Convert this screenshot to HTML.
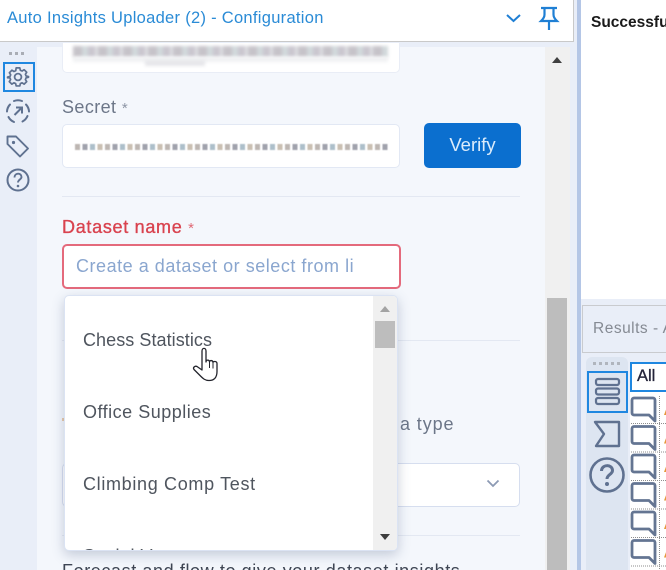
<!DOCTYPE html>
<html><head><meta charset="utf-8"><style>
*{box-sizing:border-box}
html,body{margin:0;padding:0;width:666px;height:570px;overflow:hidden}
#p{width:666px;height:570px;overflow:hidden;position:relative;background:#e9eef8;font-family:"Liberation Sans",sans-serif;filter:blur(.3px)}
.a{position:absolute}
.t{position:absolute;white-space:nowrap;line-height:20px}
.in{position:absolute;background:#fff;border:1px solid #e2e8f4;border-radius:5px}
.hr{position:absolute;height:1px;background:#e3e8f2;left:62px;width:458px}
svg{position:absolute;overflow:visible}
</style></head><body><div id="p">
<!-- title bar -->
<div class="a" style="left:0;top:0;width:574px;height:42px;background:#fff;border-bottom:1px solid #c9c9c9;border-right:1px solid #c9c9c9"></div>
<div class="t" style="left:7px;top:8px;font-size:16.500px;color:#2a8bd6;letter-spacing:.29px">Auto Insights Uploader (2) - Configuration</div>
<svg style="left:505px;top:12px" width="18" height="12" fill="none" stroke="#1f7fd4" stroke-width="2"><path d="M2 3l6.500 6L15 3"/></svg>
<svg style="left:538px;top:5px" width="22" height="26" fill="none" stroke="#1f7fd4" stroke-width="2.200"><path d="M3 3h16M6.500 3v6.500c0 3.500-2 5-3.500 6.500h16c-1.500-1.500-3.500-3-3.500-6.500V3M11 16v9"/></svg>
<!-- left rail -->
<div class="a" style="left:0;top:43px;width:37px;height:527px;background:#e9eef8"></div>
<div class="a" style="left:9px;top:52px;width:15px;height:3px;background:repeating-linear-gradient(90deg,#a9adb5 0 3px,transparent 3px 6px)"></div>
<div class="a" style="left:3px;top:62px;width:32px;height:30px;border:2px solid #1f87e0"></div>
<svg style="left:6px;top:65px" width="24" height="24" fill="none" stroke="#5f7190" stroke-width="1.800"><circle cx="12" cy="12" r="3.400"/><path d="M9.800 2h4.400l.7 2.900 2.100.9 2.500-1.600 3.100 3.100-1.600 2.500.9 2.100 2.900.7v.8l-2.900.7-.9 2.100 1.600 2.500-3.100 3.100-2.500-1.600-2.100.9-.7 2.900H9.800l-.7-2.900-2.100-.9-2.500 1.600-3.100-3.100 1.600-2.500-.9-2.100L-.7 14v-.8l2.900-.7.9-2.100-1.600-2.500 3.100-3.100 2.500 1.600 2.100-.9z" transform="translate(12 12) scale(.82) translate(-12 -13.100)" stroke-linejoin="round" stroke-width="2.100"/></svg>
<svg style="left:6px;top:99px" width="24" height="24" fill="none" stroke="#5f7190" stroke-width="2"><path d="M8 2a11 11 0 0 1 8 0M20 5.500a11 11 0 0 1 3 7M21.500 17a11 11 0 0 1-5 5.500M8 23a11 11 0 0 1-5.500-5M1 12.500a11 11 0 0 1 3-7" stroke-linecap="round"/><path d="M8.500 16l7-7M10 8.500h6v6" /></svg>
<svg style="left:6px;top:134px" width="24" height="24" fill="none" stroke="#5f7190" stroke-width="1.900" stroke-linejoin="round"><path d="M1.500 2.500h8.500l12 12-8 8-12.500-12.500z"/><circle cx="7.500" cy="8.500" r="1.600" fill="#5f7190" stroke="none"/></svg>
<svg style="left:6px;top:168px" width="24" height="24" fill="none" stroke="#5f7190" stroke-width="2"><circle cx="12" cy="12" r="10.500"/><path d="M8.500 9.500c0-5 7-5 7-.5 0 2.500-3.500 2.500-3.500 5.500" stroke-width="1.900"/><circle cx="12" cy="18" r="1.300" fill="#5f7190" stroke="none"/></svg>
<!-- panel -->
<div class="a" style="left:37px;top:47px;width:508px;height:523px;background:#f4f7fc"></div>
<!-- first input (clipped by title bar) -->
<div class="a" style="left:62px;top:43px;width:338px;height:30px;background:#fff;border:1px solid #e9edf6;border-top:0;border-radius:0 0 5px 5px"></div>
<div class="a" style="left:73px;top:46px;width:315px;height:11px;filter:blur(1.600px);opacity:.75;background:repeating-linear-gradient(90deg,#b4b0b8 0 9px,#c3ccd0 9px 15px,#b9b4c0 15px 22px,#d4d6da 22px 25px)"></div>
<div class="a" style="left:73px;top:57px;width:315px;height:5px;filter:blur(1.500px);background:#f0f1f3"></div>
<div class="a" style="left:145px;top:60px;width:60px;height:6px;filter:blur(1.500px);background:#e6e6ea"></div>
<!-- secret -->
<div class="t" style="left:62px;top:97px;font-size:18px;color:#6c7688;letter-spacing:.4px">Secret <span style="color:#8d95a5;font-size:15px">*</span></div>
<div class="in" style="left:62px;top:124px;width:338px;height:44px"></div>
<div class="a" style="left:75px;top:144px;width:314px;height:6px;filter:blur(.6px);background:repeating-linear-gradient(90deg,#bdb6b2 0 5px,#fff 5px 7.500px,#a0a2ac 7.500px 12.500px,#fff 12.500px 15px,#adbfca 15px 20px,#fff 20px 22.500px,#cabfb2 22.500px 27.500px,#fff 27.500px 30px)"></div>
<div class="a" style="left:424px;top:123px;width:97px;height:45px;background:#0b6fcf;border-radius:5px"></div>
<div class="t" style="left:424px;top:135px;width:97px;text-align:center;font-size:18.500px;color:#dcecfb">Verify</div>
<div class="hr" style="top:196px"></div>
<!-- dataset -->
<div class="t" style="left:62px;top:217px;font-size:18px;color:#d9434f;letter-spacing:.7px;-webkit-text-stroke:.35px #d9434f">Dataset name <span style="font-size:15px;color:#e06a75;-webkit-text-stroke:0">*</span></div>
<div class="in" style="left:62px;top:244px;width:339px;height:45px;border:2px solid #e46a7c"></div>
<div class="t" style="left:76px;top:256px;font-size:18px;color:#8aa6cf;letter-spacing:.53px">Create a dataset or select from li</div>
<!-- behind dropdown -->
<div class="hr" style="top:340px"></div>
<div class="a" style="left:62px;top:418px;width:2px;height:3px;background:#e8c9a8"></div>
<div class="t" style="left:400px;top:414px;font-size:18px;color:#6c7688;letter-spacing:.9px">a type</div>
<div class="in" style="left:62px;top:463px;width:458px;height:44px;border-color:#d6deef"></div>
<svg style="left:486px;top:479px" width="14" height="10" fill="none" stroke="#8c9ab4" stroke-width="1.800"><path d="M1.500 1.500l5.500 5.500 5.500-5.500"/></svg>
<div class="hr" style="top:535px"></div>
<div class="t" style="left:62px;top:561px;font-size:18px;color:#3f4654;letter-spacing:.6px">Forecast and flow to give your dataset insights</div>
<!-- dropdown -->
<div class="a" style="left:64px;top:295px;width:334px;height:256px;background:#fff;border:1px solid #dbe3f3;border-radius:5px;box-shadow:0 4px 12px rgba(70,85,125,.28);overflow:hidden">
  <div class="t" style="left:18px;top:34px;font-size:18px;color:#4f555e;letter-spacing:.06px">Chess Statistics</div>
  <div class="t" style="left:18px;top:106px;font-size:18px;color:#4f555e;letter-spacing:.5px">Office Supplies</div>
  <div class="t" style="left:18px;top:178px;font-size:18px;color:#4f555e;letter-spacing:.67px">Climbing Comp Test</div>
  <div class="t" style="left:18px;top:250px;font-size:18px;color:#4f555e;letter-spacing:.5px">Social Vegas</div>
  <div class="a" style="left:308px;top:0;width:25px;height:254px;background:#f0f0f0"></div>
  <div class="a" style="left:310px;top:25px;width:20px;height:27px;background:#bdbdbd"></div>
  <svg style="left:312px;top:8px" width="16" height="10"><path d="M3 8l5-6 5 6z" fill="#a3a3a3"/></svg>
  <svg style="left:312px;top:236px" width="16" height="10"><path d="M3 2h10l-5 6z" fill="#3d3d3d"/></svg>
</div>
<!-- cursor -->
<svg style="left:190px;top:345px" width="34" height="40"><path d="M12 24V6c0-3.500 4-3.500 4 0V17c0-2.500 3.500-2.500 3.500 0 0-2 3.500-2 3.500.5 0-1.500 4-1.500 4 1v8c0 6-3 9-8 9-4 0-6-2-8-4l-7-7c-1.500-2 1-4 3-3l5 3.500z" fill="#fff" stroke="#23242c" stroke-width="1.300" stroke-linejoin="round"/><path d="M19.500 17v6M23 17.500v6" stroke="#23242c" stroke-width="1"/></svg>
<!-- main scrollbar -->
<div class="a" style="left:545px;top:47px;width:25px;height:523px;background:#f0f0f0"></div>
<svg style="left:549px;top:55px" width="16" height="10"><path d="M3 8l5-6 5 6z" fill="#3f3f3f"/></svg>
<div class="a" style="left:547px;top:298px;width:20px;height:272px;background:#bdbdbd"></div>
<!-- right side -->
<div class="a" style="left:577px;top:0;width:4px;height:570px;background:#b4c6e6"></div>
<div class="a" style="left:581px;top:0;width:85px;height:299px;background:#fff"></div>
<div class="t" style="left:591px;top:13px;font-size:15.500px;font-weight:bold;color:#1a1a1a">Successfu</div>
<div class="a" style="left:581px;top:299px;width:85px;height:271px;background:#e9eef8"></div>
<div class="a" style="left:582px;top:305px;width:90px;height:48px;border:1px solid #c9cbcf;background:#e9eef8"></div>
<div class="t" style="left:593px;top:319px;font-size:15.500px;color:#858a93;letter-spacing:.5px">Results - A</div>
<div class="a" style="left:586px;top:357px;width:42px;height:213px;background:#dde5f1;border-radius:6px 6px 0 0"></div>
<div class="a" style="left:593px;top:362px;width:28px;height:3px;background:repeating-linear-gradient(90deg,#b0b5bd 0 3px,transparent 3px 6px)"></div>
<div class="a" style="left:587px;top:371px;width:41px;height:42px;border:2px solid #1f87e0"></div>
<svg style="left:595px;top:378px" width="26" height="28" fill="none" stroke="#5f7190" stroke-width="2.200"><rect x="1" y="1" width="23" height="6" rx="2"/><rect x="1" y="10.500" width="23" height="6" rx="2"/><rect x="1" y="20" width="23" height="6" rx="2"/></svg>
<svg style="left:594px;top:420px" width="28" height="28" fill="none" stroke="#5f7190" stroke-width="2.400" stroke-linejoin="round"><path d="M1 2h24v24H2l8-12z"/></svg>
<svg style="left:589px;top:457px" width="36" height="36" fill="none" stroke="#5f7190" stroke-width="2.600"><circle cx="18" cy="18" r="16.500"/><path d="M12.500 14c0-7 11-7 11-.5 0 4-5.500 4-5.500 8.500" stroke-width="3"/><circle cx="18" cy="27" r="2" fill="#5f7190" stroke="none"/></svg>
<!-- grid -->
<div class="a" style="left:630px;top:392px;width:36px;height:178px;background:#fff"></div>
<div class="a" style="left:630px;top:362px;width:40px;height:30px;background:#fff;border:2px solid #1f87e0"></div>
<div class="t" style="left:637px;top:366px;font-size:16.500px;color:#24243a;-webkit-text-stroke:.3px #24243a">All</div>
<div class="a" style="left:659px;top:396px;width:1px;height:174px;background:repeating-linear-gradient(180deg,#8e8e8e 0 1px,transparent 1px 2px)"></div>
<svg style="left:631px;top:396px" width="35" height="174">
  <g><path d="M3 2h19a2 2 0 0 1 2 2v21l-6-6H3a2 2 0 0 1-2-2V4a2 2 0 0 1 2-2z" fill="#fff" stroke="#647592" stroke-width="2.800" stroke-linejoin="round"/><path d="M0 27.500h35" stroke="#8e8e8e" stroke-dasharray="1 1"/><path d="M33 19l3-8v8z" fill="#e6973a"/></g>
  <g transform="translate(0,28.500)"><path d="M3 2h19a2 2 0 0 1 2 2v21l-6-6H3a2 2 0 0 1-2-2V4a2 2 0 0 1 2-2z" fill="#fff" stroke="#647592" stroke-width="2.800" stroke-linejoin="round"/><path d="M0 27.500h35" stroke="#8e8e8e" stroke-dasharray="1 1"/><path d="M33 19l3-8v8z" fill="#e6973a"/></g>
  <g transform="translate(0,57)"><path d="M3 2h19a2 2 0 0 1 2 2v21l-6-6H3a2 2 0 0 1-2-2V4a2 2 0 0 1 2-2z" fill="#fff" stroke="#647592" stroke-width="2.800" stroke-linejoin="round"/><path d="M0 27.500h35" stroke="#8e8e8e" stroke-dasharray="1 1"/><path d="M33 19l3-8v8z" fill="#e6973a"/></g>
  <g transform="translate(0,85.500)"><path d="M3 2h19a2 2 0 0 1 2 2v21l-6-6H3a2 2 0 0 1-2-2V4a2 2 0 0 1 2-2z" fill="#fff" stroke="#647592" stroke-width="2.800" stroke-linejoin="round"/><path d="M0 27.500h35" stroke="#8e8e8e" stroke-dasharray="1 1"/><path d="M33 19l3-8v8z" fill="#e6973a"/></g>
  <g transform="translate(0,114)"><path d="M3 2h19a2 2 0 0 1 2 2v21l-6-6H3a2 2 0 0 1-2-2V4a2 2 0 0 1 2-2z" fill="#fff" stroke="#647592" stroke-width="2.800" stroke-linejoin="round"/><path d="M0 27.500h35" stroke="#8e8e8e" stroke-dasharray="1 1"/><path d="M33 19l3-8v8z" fill="#e6973a"/></g>
  <g transform="translate(0,142.500)"><path d="M3 2h19a2 2 0 0 1 2 2v21l-6-6H3a2 2 0 0 1-2-2V4a2 2 0 0 1 2-2z" fill="#fff" stroke="#647592" stroke-width="2.800" stroke-linejoin="round"/><path d="M0 27.500h35" stroke="#8e8e8e" stroke-dasharray="1 1"/><path d="M33 19l3-8v8z" fill="#e6973a"/></g>
</svg>
</div></body></html>
